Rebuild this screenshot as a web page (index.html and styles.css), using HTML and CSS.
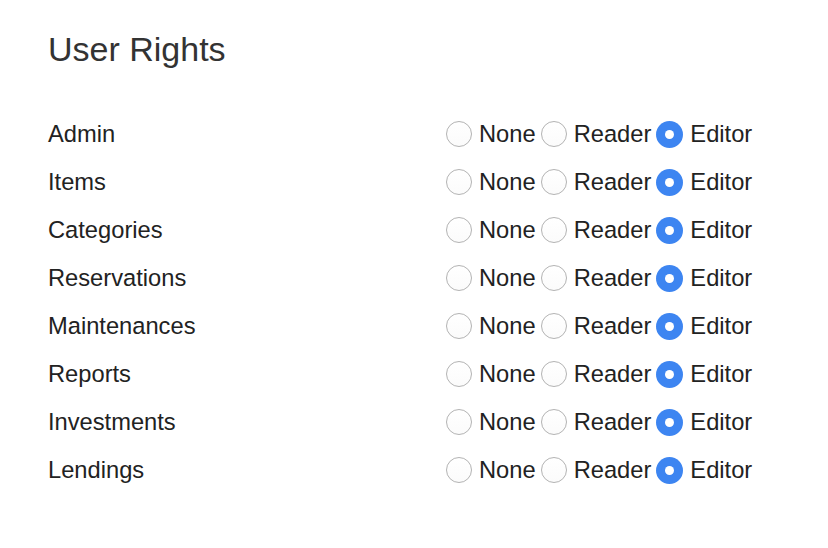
FILE: index.html
```html
<!DOCTYPE html>
<html>
<head>
<meta charset="utf-8">
<link rel="stylesheet" href="styles.css">
</head>
<body>
<div class="page">
  <h1 class="title">User Rights</h1>
  <div class="rights">
    <div class="row"><span class="name">Admin</span><span class="opts"><label class="opt"><input type="radio" name="r1"><span>None</span></label><label class="opt"><input type="radio" name="r1"><span>Reader</span></label><label class="opt"><input type="radio" name="r1" checked><span>Editor</span></label></span></div>
    <div class="row"><span class="name">Items</span><span class="opts"><label class="opt"><input type="radio" name="r2"><span>None</span></label><label class="opt"><input type="radio" name="r2"><span>Reader</span></label><label class="opt"><input type="radio" name="r2" checked><span>Editor</span></label></span></div>
    <div class="row"><span class="name">Categories</span><span class="opts"><label class="opt"><input type="radio" name="r3"><span>None</span></label><label class="opt"><input type="radio" name="r3"><span>Reader</span></label><label class="opt"><input type="radio" name="r3" checked><span>Editor</span></label></span></div>
    <div class="row"><span class="name">Reservations</span><span class="opts"><label class="opt"><input type="radio" name="r4"><span>None</span></label><label class="opt"><input type="radio" name="r4"><span>Reader</span></label><label class="opt"><input type="radio" name="r4" checked><span>Editor</span></label></span></div>
    <div class="row"><span class="name">Maintenances</span><span class="opts"><label class="opt"><input type="radio" name="r5"><span>None</span></label><label class="opt"><input type="radio" name="r5"><span>Reader</span></label><label class="opt"><input type="radio" name="r5" checked><span>Editor</span></label></span></div>
    <div class="row"><span class="name">Reports</span><span class="opts"><label class="opt"><input type="radio" name="r6"><span>None</span></label><label class="opt"><input type="radio" name="r6"><span>Reader</span></label><label class="opt"><input type="radio" name="r6" checked><span>Editor</span></label></span></div>
    <div class="row"><span class="name">Investments</span><span class="opts"><label class="opt"><input type="radio" name="r7"><span>None</span></label><label class="opt"><input type="radio" name="r7"><span>Reader</span></label><label class="opt"><input type="radio" name="r7" checked><span>Editor</span></label></span></div>
    <div class="row"><span class="name">Lendings</span><span class="opts"><label class="opt"><input type="radio" name="r8"><span>None</span></label><label class="opt"><input type="radio" name="r8"><span>Reader</span></label><label class="opt"><input type="radio" name="r8" checked><span>Editor</span></label></span></div>
  </div>
</div>
</body>
</html>
```
FILE: styles.css
```css
html, body {
  margin: 0;
  padding: 0;
  background: #fff;
}
.page {
  padding: 29px 48px 0 48px;
  font-family: "Liberation Sans", Arial, Helvetica, sans-serif;
}
.title {
  margin: 0 0 41px 0;
  font-size: 34px;
  line-height: 40px;
  font-weight: normal;
  color: #333;
}
.rights {
  display: flex;
  flex-direction: column;
}
.row {
  display: flex;
  align-items: center;
  height: 48px;
  font-size: 23.7px;
  line-height: 48px;
  color: #222;
}
.name {
  width: 398px;
  flex: none;
}
.opts {
  display: flex;
  align-items: center;
  gap: 5px;
}
.opt {
  display: flex;
  align-items: center;
  gap: 7px;
}
.opt input {
  appearance: none;
  -webkit-appearance: none;
  margin: 0;
  width: 26px;
  height: 26px;
  border-radius: 50%;
  border: 1px solid #b3b3b3;
  background: linear-gradient(#ffffff, #fbfbfb);
  box-sizing: border-box;
  position: relative;
}
.opt input:checked {
  width: 27px;
  height: 27px;
  border: none;
  background: #3d85f1;
}
.opt input:checked::after {
  content: "";
  position: absolute;
  left: 50%;
  top: 50%;
  width: 9px;
  height: 9px;
  margin: -4.5px 0 0 -4.5px;
  border-radius: 50%;
  background: #fff;
}
```
